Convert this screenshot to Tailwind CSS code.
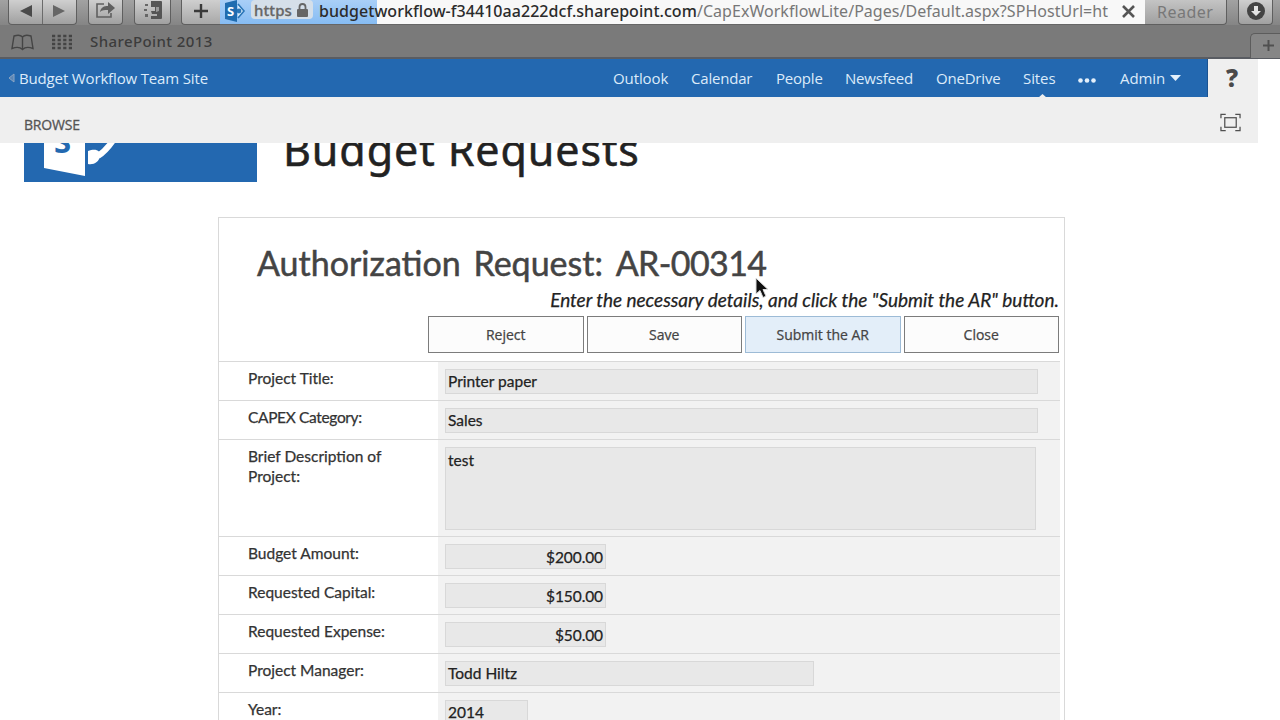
<!DOCTYPE html>
<html lang="en">
<head>
    <meta charset="UTF-8">
    <meta name="viewport" content="width=device-width, initial-scale=1.0">
    <title>Budget Requests</title>
    <script src="https://cdn.jsdelivr.net/npm/@tailwindcss/browser@4"></script>
</head>

<body class="relative bg-white w-[1280px] h-[720px] overflow-hidden whitespace-nowrap font-['Open_Sans',sans-serif]">

    <!-- Browser toolbar -->
    <div class="h-[59px] bg-[#7a7a7a] border-b-2 border-[#595c62] font-['Noto_Sans',sans-serif]">
        <div class="flex h-[25px] pl-2 bg-linear-to-b from-[#a2a2a2] to-[#858585]">
            <div class="flex w-[69px] h-[25px] bg-linear-to-b from-[#cfcfcf] to-[#a0a0a0] border border-t-0 border-[#5f5f5f] rounded-b-[4px]">
                <div class="flex w-[34px] items-center justify-center border-r border-[#6b6b6b]">
                    <svg class="w-3 h-3 -mt-0.5" viewBox="0 0 12 12"><path d="M12 0v12L0 6z" fill="#4a4a4a" /></svg>
                </div>
                <div class="flex w-[33px] items-center justify-center">
                    <svg class="w-3 h-3 -mt-0.5 -ml-0.5" viewBox="0 0 12 12"><path d="M0 0v12l12-6z" fill="#666" /></svg>
                </div>
            </div>
            <div class="flex justify-center w-[35px] h-[25px] ml-[11px] bg-linear-to-b from-[#cfcfcf] to-[#a0a0a0] border border-t-0 border-[#5f5f5f] rounded-b-[4px]">
                <svg class="w-5 h-5" viewBox="0 0 20 20" fill="none">
                    <path d="M8 4H1v13h14v-4" stroke="#606060" stroke-width="1.6" />
                    <path d="M4 12c1-5 4-6 8-6V2l7 6-7 6v-4c-3 0-6 0-8 2z" fill="#606060" />
                </svg>
            </div>
            <div class="flex justify-center w-[37px] h-[25px] ml-[11px] bg-linear-to-b from-[#cfcfcf] to-[#a0a0a0] border border-t-0 border-[#5f5f5f] rounded-b-[4px]">
                <svg class="w-5 h-5" viewBox="0 0 20 20">
                    <path d="M8 1h10q1 0 1 1v16q0 1-1 1H8v-3h6v-2H9l-1-3h4V7H8z" fill="#555" />
                    <path d="M13 7h3v4l-3 1z" fill="#999" />
                    <path d="M2 4h3v2H2zM1 9h3v2H1zM2 14h3v3H2z" fill="#666" />
                </svg>
            </div>
            <div class="flex items-center justify-center w-[39px] h-[25px] ml-[10px] bg-linear-to-b from-[#cfcfcf] to-[#a8a8a8] border border-t-0 border-r-0 border-[#5f5f5f] rounded-bl-[4px]">
                <svg class="w-[14px] h-[14px] -mt-0.5" viewBox="0 0 14 14"><path d="M7 0v14M0 7h14" stroke="#3a3a3a" stroke-width="2.4" /></svg>
            </div>
            <!-- Address field -->
            <div class="relative flex w-[925px] h-[25px] bg-[#f8f8f8] border-b border-[#666]">
                <div class="absolute left-0 top-0 w-[157px] h-6 bg-linear-to-b from-[#a9cff7] to-[#86bcf3]"></div>
                <svg class="relative w-[22px] h-[22px] ml-1" viewBox="0 0 22 22">
                    <path d="M14 4l6 7-6 7" fill="#d9ecfa" stroke="#2b76b8" stroke-width="1.6" />
                    <circle cx="15" cy="11" r="2.4" fill="#2b76b8" />
                    <path d="M1 3l12-3v22L1 19z" fill="#1f6cb0" />
                    <text x="3" y="16" font-size="13" font-weight="700" font-family="Open Sans" fill="#fff">S</text>
                </svg>
                <div class="relative flex items-center w-[62px] h-[19px] ml-[5px] pl-[3px] rounded-[4px] bg-[#d5dfe9]">
                    <span class="text-[15px] leading-[22px] font-medium tracking-[0.1px] text-[#666] [-webkit-text-stroke:0.3px]">https</span>
                    <svg class="w-[11px] h-[14px] ml-[5px]" viewBox="0 0 11 14">
                        <path d="M2.5 7V4a3 3 0 0 1 6 0v3" fill="none" stroke="#666" stroke-width="1.8" />
                        <rect y="6" width="11" height="8" rx="1" fill="#666" />
                    </svg>
                </div>
                <span class="relative ml-[6px] text-[16px] leading-[22px] font-medium tracking-[0.05px] text-[#2b2b2b]">budgetworkflow-f34410aa222dcf.sharepoint.com</span>
                <span class="relative text-[16px] leading-[22px] tracking-[0.04px] text-[#777]">/CapExWorkflowLite/Pages/Default.aspx?SPHostUrl=ht</span>
                <svg class="absolute left-[902px] top-[5px] w-[13px] h-[13px]" viewBox="0 0 13 13"><path d="M1 1l11 11M12 1L1 12" stroke="#555" stroke-width="2.6" /></svg>
            </div>
            <div class="w-[82px] h-[25px] pl-[12px] bg-linear-to-b from-[#c4c4c4] to-[#a0a0a0] border-r border-b border-[#5f5f5f] rounded-br-[4px]">
                <span class="text-[16px] leading-[22px] tracking-[0.5px] text-[#787878]">Reader</span>
            </div>
            <div class="flex justify-center w-[35px] h-[25px] ml-[11px] bg-linear-to-b from-[#cfcfcf] to-[#a0a0a0] border border-t-0 border-[#5f5f5f] rounded-b-[4px]">
                <svg class="w-[18px] h-[18px] mt-0.5" viewBox="0 0 18 18">
                    <circle cx="9" cy="9" r="9" fill="#444" />
                    <path d="M7 4h4v5h3l-5 5-5-5h3z" fill="#e4e4e4" />
                </svg>
            </div>
        </div>
        <!-- Bookmarks bar -->
        <div class="flex items-center h-8 pl-[11px]">
            <svg class="w-[23px] h-[17px] mt-0.5" viewBox="0 0 23 17" fill="none" stroke="#454545" stroke-width="1.4">
                <path d="M11.5 3C9 0 6 1 3 2L1 14.500c4-1.500 8-1.500 10.500 1 2.500-2.500 6.500-2.500 10.500-1L20 2c-3-1-6-2-8.500 1zM11.500 3v12" />
            </svg>
            <svg class="w-5 h-4 ml-[18px] mt-0.5" viewBox="0 0 20 16">
                <path d="M0 2h20M0 6h20M0 10h20M0 14h20" stroke="#444" stroke-width="2.600" stroke-dasharray="3.200 2.400" />
            </svg>
            <span class="ml-[18px] mt-px text-[15px] font-medium tracking-[0.4px] text-[#3c3c3c]">SharePoint 2013</span>
            <div class="flex items-center justify-center w-[30px] h-[25px] mt-2 ml-auto bg-[#868686] border-l border-t border-[#5c5c5c] rounded-tl-[5px]">
                <svg class="w-[11px] h-[11px] ml-1.5" viewBox="0 0 11 11"><path d="M5.500 0v11M0 5.500h11" stroke="#505050" stroke-width="2" /></svg>
            </div>
        </div>
    </div>

    <!-- Suite bar -->
    <div class="w-[1258px] h-[84px] bg-[#efefef]">
        <div class="flex h-[38px]">
            <div class="relative flex items-center w-[1208px] bg-[#2368b0] border-r border-[#1b5391] text-[15px] text-[#dcebfa]">
                <svg class="w-[7px] h-[10px] ml-2" viewBox="0 0 7 10"><path d="M6 1v8L1 5z" fill="#5c86b5" stroke="#8aa5c4" /></svg>
                <span class="w-[594px] ml-1 tracking-[-0.15px]">Budget Workflow Team Site</span>
                <span class="w-[78px] tracking-[-0.1px]">Outlook</span>
                <span class="w-[85px] tracking-[-0.2px]">Calendar</span>
                <span class="w-[69px] tracking-[-0.2px]">People</span>
                <span class="w-[91px] tracking-[-0.2px]">Newsfeed</span>
                <span class="w-[87px] tracking-[-0.2px]">OneDrive</span>
                <span class="w-[55px] tracking-[-0.1px]">Sites</span>
                <svg class="w-[18px] h-[5px] mt-1" viewBox="0 0 18 5" fill="#e4f0fb"><circle cx="2.500" cy="2.500" r="2.300" /><circle cx="9" cy="2.500" r="2.300" /><circle cx="15.500" cy="2.500" r="2.300" /></svg>
                <span class="ml-6 tracking-[-0.1px]">Admin</span>
                <svg class="w-[11px] h-[6px] ml-[5px]" viewBox="0 0 11 6"><path d="M0 0h11L5.500 6z" fill="#e4f0fb" /></svg>
                <svg class="absolute left-[1039px] bottom-0 w-[7px] h-[3px]" viewBox="0 0 9 4"><path d="M0 4L4.500 0 9 4z" fill="#efefef" /></svg>
            </div>
            <div class="flex items-center justify-center w-[48px] text-[24px] font-extrabold text-[#4a4a4a]">?</div>
        </div>
        <div class="flex items-center justify-between h-[46px] pl-6 pr-[17px] pt-1">
            <span class="mt-1 text-[14px] tracking-[-0.2px] text-[#555] [-webkit-text-stroke:0.3px]">BROWSE</span>
            <svg class="w-[21px] h-[19px]" viewBox="0 0 22 19" fill="none" stroke="#505050" stroke-width="1.300">
                <path d="M1 5V1h5M16 1h5v4M21 14v4h-5M6 18H1v-4" />
                <rect x="5" y="4.500" width="12" height="10" />
            </svg>
        </div>
    </div>

    <!-- Site logo and page title, scrolled partly under the ribbon -->
    <div class="flex h-[74px] pl-6 overflow-hidden">
        <svg class="w-[233px] h-[39px]" viewBox="0 0 233 39">
            <rect width="233" height="39" fill="#2368b0" />
            <path d="M20 0h41v33L20 25z" fill="#fff" />
            <text x="30" y="10" font-size="31" font-weight="700" font-family="Open Sans" fill="#2368b0">S</text>
            <path d="M90 -4Q82 8 74 13" fill="none" stroke="#fff" stroke-width="6" />
            <path d="M64 8c8-3 13 0 12 5-1 6-6 9-12 8z" fill="#fff" />
        </svg>
        <h1 class="ml-[26px] -mt-[23px] h-[60px] text-[43px] leading-[60px] tracking-[0.9px] text-[#222] font-['Noto_Sans',sans-serif] [-webkit-text-stroke:0.5px]">Budget Requests</h1>
    </div>

    <!-- Request form -->
    <div class="w-[847px] h-[520px] ml-[218px] pr-[4px] border border-[#d9d9d9] text-[15.5px] font-['Lato',sans-serif] [-webkit-text-stroke:0.25px]">
        <h2 class="h-[73px] pt-[23px] pl-[38px] text-[34px] leading-[44px] [word-spacing:4px] text-[#444] [-webkit-text-stroke:0.5px]">Authorization Request: <span class="tracking-[-0.6px]">AR-00314</span></h2>
        <p class="h-[25px] pr-[1px] text-right text-[19px] leading-[18px] italic text-[#222]">Enter the necessary details, and click the "Submit the AR" button.</p>
        <div class="flex justify-end gap-[3px] h-[45px] pr-[1px] font-['Open_Sans',sans-serif] text-[14px] text-[#444]">
            <button class="w-[155.500px] h-[37px] bg-[#fcfcfc] border border-[#7c7c7c]">Reject</button>
            <button class="w-[155.500px] h-[37px] bg-[#fcfcfc] border border-[#7c7c7c]">Save</button>
            <button class="w-[155.500px] h-[37px] bg-[#e3eef9] border border-[#9dbbd6]">Submit the AR</button>
            <button class="w-[155.500px] h-[37px] bg-[#fcfcfc] border border-[#7c7c7c]">Close</button>
        </div>

        <div class="grid grid-cols-[219px_1fr] text-[#333] leading-[19.5px]">
            <div class="h-[39px] pl-[29px] pt-[7px] border-t border-[#d9d9d9]">Project Title:</div>
            <div class="pl-[7px] pt-[7px] bg-[#f2f2f2] border-t border-[#d9d9d9]">
                <div class="w-[593px] h-[25px] px-0.5 bg-[#e8e8e8] border border-[#d8d8d8] leading-[23px] text-[#222]">Printer paper</div>
            </div>

            <div class="h-[39px] pl-[29px] pt-[7px] border-t border-[#d9d9d9] tracking-[-0.35px]">CAPEX Category:</div>
            <div class="pl-[7px] pt-[7px] bg-[#f2f2f2] border-t border-[#d9d9d9]">
                <div class="w-[593px] h-[25px] px-0.5 bg-[#e8e8e8] border border-[#d8d8d8] leading-[23px] text-[#222]">Sales</div>
            </div>

            <div class="h-[97px] pl-[29px] pt-[7px] border-t border-[#d9d9d9]">Brief Description of<br>Project:</div>
            <div class="pl-[7px] pt-[7px] bg-[#f2f2f2] border-t border-[#d9d9d9]">
                <div class="w-[591px] h-[83px] px-0.5 bg-[#e8e8e8] border border-[#d8d8d8] leading-[24px] text-[#222]">test</div>
            </div>

            <div class="h-[39px] pl-[29px] pt-[7px] border-t border-[#d9d9d9]">Budget Amount:</div>
            <div class="pl-[7px] pt-[7px] bg-[#f2f2f2] border-t border-[#d9d9d9]">
                <div class="w-[161px] h-[25px] px-0.5 bg-[#e8e8e8] border border-[#d8d8d8] leading-[24px] text-right tracking-[-0.1px] text-[#222]">$200.00</div>
            </div>

            <div class="h-[39px] pl-[29px] pt-[7px] border-t border-[#d9d9d9]">Requested Capital:</div>
            <div class="pl-[7px] pt-[7px] bg-[#f2f2f2] border-t border-[#d9d9d9]">
                <div class="w-[161px] h-[25px] px-0.5 bg-[#e8e8e8] border border-[#d8d8d8] leading-[24px] text-right tracking-[-0.1px] text-[#222]">$150.00</div>
            </div>

            <div class="h-[39px] pl-[29px] pt-[7px] border-t border-[#d9d9d9]">Requested Expense:</div>
            <div class="pl-[7px] pt-[7px] bg-[#f2f2f2] border-t border-[#d9d9d9]">
                <div class="w-[161px] h-[25px] px-0.5 bg-[#e8e8e8] border border-[#d8d8d8] leading-[24px] text-right tracking-[-0.1px] text-[#222]">$50.00</div>
            </div>

            <div class="h-[39px] pl-[29px] pt-[7px] border-t border-[#d9d9d9]">Project Manager:</div>
            <div class="pl-[7px] pt-[7px] bg-[#f2f2f2] border-t border-[#d9d9d9]">
                <div class="w-[369px] h-[25px] px-0.5 bg-[#e8e8e8] border border-[#d8d8d8] leading-[23px] text-[#222]">Todd Hiltz</div>
            </div>

            <div class="h-[39px] pl-[29px] pt-[7px] border-t border-[#d9d9d9]">Year:</div>
            <div class="pl-[7px] pt-[7px] bg-[#f2f2f2] border-t border-[#d9d9d9]">
                <div class="w-[83px] h-[25px] px-0.5 bg-[#e8e8e8] border border-[#d8d8d8] leading-[23px] text-[#222]">2014</div>
            </div>
        </div>
    </div>

    <!-- Mouse pointer -->
    <svg class="absolute left-[755px] top-[277px] w-[14px] h-[22px]" viewBox="0 0 14 22">
        <path d="M1 1v16l4-3.500 3 7 3-1.300-3-6.700h5z" fill="#111" stroke="#ddd" />
    </svg>
</body>
</html>
